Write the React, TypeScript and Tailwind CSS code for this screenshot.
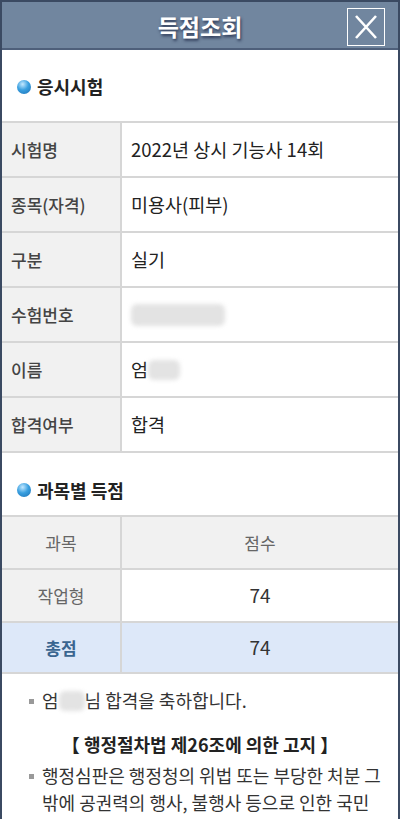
import React from "react";

const FONT = "font-['Noto_Sans_CJK_KR','Noto_Sans',sans-serif]";

const examRows: { label: string; value: React.ReactNode }[] = [
  { label: "시험명", value: "2022년 상시 기능사 14회" },
  { label: "종목(자격)", value: "미용사(피부)" },
  { label: "구분", value: "실기" },
  { label: "수험번호", value: <Blur className="w-[94px] h-[22px]" /> },
  {
    label: "이름",
    value: (
      <span className="flex items-center">
        엄<Blur className="w-[32px] h-[20px]" />
      </span>
    ),
  },
  { label: "합격여부", value: "합격" },
];

function Blur({ className }: { className: string }) {
  return <span className={`inline-block rounded-md bg-[#e3e3e3] blur-[2px] ${className}`} />;
}

function Dot() {
  return (
    <span className="inline-block w-[14px] h-[14px] rounded-full bg-[radial-gradient(circle_at_40%_30%,#c4e8ff_0%,#3aa0e0_45%,#1a6fb4_100%)]" />
  );
}

function Bullet() {
  return <span className="inline-block w-[5px] h-[5px] bg-[#999] mr-[8px] shrink-0 mt-[12px] self-start" />;
}

function SectionTitle({ children }: { children: React.ReactNode }) {
  return (
    <div className="flex items-center gap-[6px] pl-[15px]">
      <Dot />
      <span className="text-[18px] font-bold text-[#222]">{children}</span>
    </div>
  );
}

export default function App() {
  return (
    <div className={`w-[400px] h-[819px] overflow-hidden bg-white border-x-2 border-t-2 border-[#3b4a62] flex flex-col ${FONT}`}>
      {/* header */}
      <div className="relative h-[48px] shrink-0 bg-[#71869f] border-b-2 border-[#4e5f7a] flex items-center justify-center">
        <span className="mt-[2px] text-[23px] font-bold text-white [text-shadow:1px_2px_3px_rgba(20,30,60,0.75)]">득점조회</span>
        <div className="absolute right-[13px] top-[6px] w-[38px] h-[38px] border-[1.5px] border-white flex items-center justify-center">
          <svg width="28" height="28" viewBox="0 0 28 28">
            <path d="M4 3 L24 25 M24 3 L4 25" stroke="white" strokeWidth="2.6" />
          </svg>
        </div>
      </div>

      {/* 응시시험 */}
      <div className="h-[71px] shrink-0 flex items-center pt-[2px]">
        <SectionTitle>응시시험</SectionTitle>
      </div>
      <div className="border-t-2 border-[#d6d6d6]">
        {examRows.map((r) => (
          <div key={r.label} className="flex h-[55px] border-b-2 border-[#d6d6d6]">
            <div className="w-[120px] shrink-0 bg-[#f1f1f1] border-r-2 border-[#d6d6d6] flex items-center pl-[9px] text-[17px] font-medium text-[#444]">
              {r.label}
            </div>
            <div className="flex-1 flex items-center pl-[9px] text-[18.5px] text-[#222]">{r.value}</div>
          </div>
        ))}
      </div>

      {/* 과목별 득점 */}
      <div className="h-[62px] shrink-0 flex items-center pt-[12px]">
        <SectionTitle>과목별 득점</SectionTitle>
      </div>
      <div className="border-t-2 border-[#d6d6d6]">
        <div className="flex h-[53px] border-b-2 border-[#d6d6d6] bg-[#f1f1f1] text-[17px] text-[#666]">
          <div className="w-[120px] shrink-0 border-r-2 border-[#d6d6d6] flex items-center justify-center">과목</div>
          <div className="flex-1 flex items-center justify-center">점수</div>
        </div>
        <div className="flex h-[53px] border-b-2 border-[#d6d6d6] text-[17px]">
          <div className="w-[120px] shrink-0 bg-[#f1f1f1] border-r-2 border-[#d6d6d6] flex items-center justify-center text-[#666]">작업형</div>
          <div className="flex-1 flex items-center justify-center text-[19px] text-[#333]">74</div>
        </div>
        <div className="flex h-[51px] border-b-2 border-[#d6d6d6] bg-[#dde8f9] text-[17px]">
          <div className="w-[120px] shrink-0 border-r-2 border-[#d6d6d6] flex items-center justify-center font-bold text-[#3a6590]">총점</div>
          <div className="flex-1 flex items-center justify-center text-[19px] text-[#333]">74</div>
        </div>
      </div>

      {/* notice */}
      <div className="pl-[27px] pr-[16px] pt-[13px] text-[18px] text-[#333] leading-[27px]">
        <div className="flex">
          <Bullet />
          <span className="flex items-center">
            엄<Blur className="w-[26px] h-[20px]" />님 합격을 축하합니다.
          </span>
        </div>
        <div className="mt-[17px] -ml-[11px] text-center font-bold text-[#222]">【 행정절차법 제26조에 의한 고지 】</div>
        <div className="mt-[4px] flex">
          <Bullet />
          <span className="-ml-[13px] pl-[13px]">
            행정심판은 행정청의 위법 또는 부당한 처분 그 밖에 공권력의 행사, 불행사 등으로 인한 국민
          </span>
        </div>
      </div>
    </div>
  );
}
